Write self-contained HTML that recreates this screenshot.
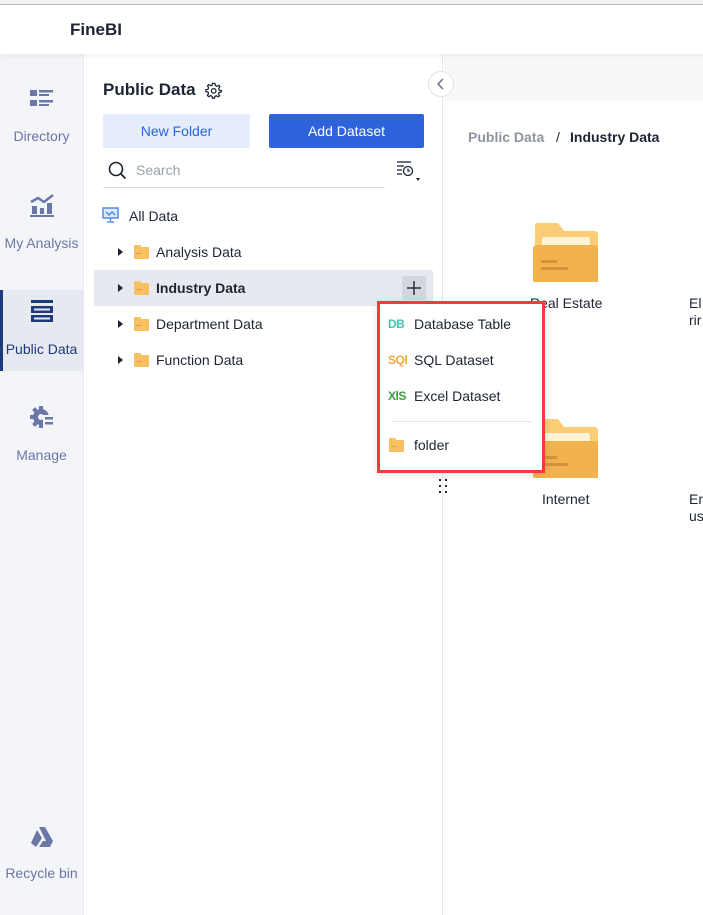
<!DOCTYPE html>
<html><head><meta charset="utf-8"><style>
*{margin:0;padding:0;box-sizing:border-box}
body{width:703px;height:915px;overflow:hidden;background:#fff;font-family:"Liberation Sans",sans-serif;position:relative;color:#1d2433}
.abs{position:absolute}
.topline{left:0;top:0;width:703px;height:5px;background:#f2f2f2;border-bottom:1px solid #bdbdbd}
.header{left:0;top:5px;width:703px;height:49px;background:#fff;box-shadow:0 2px 6px rgba(0,0,0,.06);z-index:2}
.side{left:0;top:54px;width:84px;height:861px;background:#f4f5f9;border-right:1px solid #e8e9ee}
.nav{position:absolute;left:0;width:83px;text-align:center;font-size:14px;color:#6b77a6}
.panel{left:84px;top:54px;width:359px;height:861px;background:#fff;border-right:1px solid #e6e7eb}
.band{left:444px;top:54px;width:259px;height:47px;background:#f7f8fa}
.tree{font-size:14px;color:#1d2433}
.folder{position:absolute;width:15px;height:12px;background:#f8c060;border-radius:1px}
.folder:before{content:"";position:absolute;left:0;top:-2px;width:7px;height:3px;background:#f8c060;border-radius:1px 1px 0 0}
.folder:after{content:"";position:absolute;left:2px;top:6px;width:6px;height:1px;background:#e0a040}
.tri{width:0;height:0;border-left:5px solid #1d2433;border-top:4px solid transparent;border-bottom:4px solid transparent}
.big{width:66px;height:60px}
</style></head><body>
<div class="abs topline"></div>
<div class="abs header"><div class="abs" style="left:70px;top:15px;font-size:17px;font-weight:bold;color:#1d2433">FineBI</div></div>
<div class="abs side">
  <div class="nav" style="top:34px">
    <svg width="24" height="22" viewBox="0 0 24 22" style="display:block;margin:0 auto"><rect x="0" y="2" width="7" height="6" fill="#6b77a6"/><rect x="9" y="2" width="14" height="2.5" fill="#6b77a6"/><rect x="9" y="6" width="10" height="2" fill="#6b77a6"/><rect x="0" y="12" width="7" height="6" fill="#6b77a6"/><rect x="9" y="12" width="14" height="2.5" fill="#6b77a6"/><rect x="9" y="16" width="10" height="2" fill="#6b77a6"/></svg>
    <div style="margin-top:18px">Directory</div></div>
  <div class="nav" style="top:140px">
    <svg width="26" height="24" viewBox="0 0 26 24" style="display:block;margin:0 auto"><path d="M2 8 L9 4 L15 8 L24 1" stroke="#6b77a6" stroke-width="2.5" fill="none"/><rect x="3" y="12" width="5" height="8" fill="#6b77a6"/><rect x="11" y="14" width="4" height="6" fill="#6b77a6"/><rect x="18" y="9" width="5" height="11" fill="#6b77a6"/><rect x="1" y="21" width="24" height="2" fill="#6b77a6"/></svg>
    <div style="margin-top:17px">My Analysis</div></div>
  <div style="position:absolute;left:0;top:236px;width:83px;height:81px;background:#e7e9f1;border-left:3px solid #1f3a7a"></div>
  <div class="nav" style="top:245px;color:#1f3a7a">
    <svg width="24" height="24" viewBox="0 0 24 24" style="display:block;margin:0 auto"><rect x="1" y="1" width="22" height="3" fill="#1f3a7a"/><rect x="1" y="7" width="22" height="7" fill="#1f3a7a"/><rect x="4" y="9.5" width="16" height="2" fill="#e7e9f1"/><rect x="1" y="16" width="22" height="7" fill="#1f3a7a"/><rect x="4" y="18.5" width="16" height="2" fill="#e7e9f1"/></svg>
    <div style="margin-top:18px">Public Data</div></div>
  <div class="nav" style="top:351px">
    <svg width="24" height="24" viewBox="0 0 24 24" style="display:block;margin:0 auto"><circle cx="11" cy="12" r="8" fill="#6b77a6"/><g fill="#6b77a6"><rect x="9" y="1" width="4" height="4"/><rect x="9" y="19" width="4" height="4"/><rect x="0" y="10" width="4" height="4"/><rect x="3" y="3" width="4" height="4" transform="rotate(45 5 5)"/><rect x="3" y="17" width="4" height="4" transform="rotate(45 5 19)"/></g><circle cx="11" cy="12" r="3" fill="#f4f5f9"/><rect x="13" y="10" width="10" height="12" fill="#f4f5f9"/><rect x="15" y="12" width="8" height="2.5" fill="#6b77a6"/><rect x="15" y="17" width="8" height="2.5" fill="#6b77a6"/></svg>
    <div style="margin-top:18px">Manage</div></div>
  <div class="nav" style="top:772px">
    <svg width="24" height="22" viewBox="0 0 24 22" style="display:block;margin:0 auto"><path d="M9 1 L15 1 L23 15 L19 21 Z M7 4 L12 12 L6 21 L1 17 Z M13 15 L23 15 L20 21 L9 21 Z" fill="#6b77a6"/></svg>
    <div style="margin-top:17px">Recycle bin</div></div>
</div>
<div class="abs panel">
  <div class="abs" style="left:19px;top:26px;font-size:17px;font-weight:bold">Public Data</div>
  <svg class="abs" style="left:121px;top:28px" width="17" height="17" viewBox="0 0 24 24"><path d="M12 2 L14 2 L14.6 4.8 L17 6 L19.6 4.6 L21 6.4 L19.4 9 L20 11.4 L23 12 L23 14 L20 14.6 L19 17 L20.6 19.4 L18.6 21 L16 19.4 L14 20.2 L13.4 23 L10.6 23 L10 20.2 L7.8 19.2 L5.2 20.8 L3.4 19 L5 16.4 L4.2 14.2 L1.2 13.6 L1.2 11 L4.2 10.4 L5 8 L3.6 5.4 L5.4 3.6 L8 5.2 L10.2 4.4 L10.6 2 Z" fill="none" stroke="#1d2433" stroke-width="1.8"/><circle cx="12.3" cy="12.5" r="3.2" fill="none" stroke="#1d2433" stroke-width="1.8"/></svg>
  <div class="abs" style="left:19px;top:60px;width:147px;height:34px;background:#e5edfc;border-radius:2px;color:#2d63d8;font-size:14px;text-align:center;line-height:34px">New Folder</div>
  <div class="abs" style="left:185px;top:60px;width:155px;height:34px;background:#2e63db;border-radius:2px;color:#fff;font-size:14px;text-align:center;line-height:34px">Add Dataset</div>
  <svg class="abs" style="left:24px;top:107px" width="19" height="19" viewBox="0 0 19 19"><circle cx="8" cy="8" r="6.5" fill="none" stroke="#1d2433" stroke-width="1.6"/><line x1="13" y1="13" x2="17.5" y2="17.5" stroke="#1d2433" stroke-width="1.8"/></svg>
  <div class="abs" style="left:52px;top:108px;font-size:14px;color:#9aa0ab">Search</div>
  <div class="abs" style="left:19px;top:133px;width:282px;height:1px;background:#dcdee3"></div>
  <svg class="abs" style="left:312px;top:106px" width="28" height="24" viewBox="0 0 28 24"><line x1="1" y1="2" x2="15" y2="2" stroke="#1d2433" stroke-width="1.3"/><line x1="1" y1="6" x2="8" y2="6" stroke="#1d2433" stroke-width="1.3"/><line x1="1" y1="10" x2="6" y2="10" stroke="#1d2433" stroke-width="1.3"/><line x1="1" y1="14" x2="6" y2="14" stroke="#1d2433" stroke-width="1.3"/><circle cx="12" cy="11" r="4.5" fill="none" stroke="#1d2433" stroke-width="1.3"/><path d="M12 8.5 V11 H14" stroke="#1d2433" stroke-width="1.2" fill="none"/><path d="M20 18 L24 18 L22 21 Z" fill="#1d2433"/></svg>
  <svg class="abs" style="left:18px;top:153px" width="17" height="16" viewBox="0 0 17 16"><rect x="1" y="1" width="15" height="10" fill="#dbe7fb" stroke="#4a86e8" stroke-width="1.4"/><path d="M4 5 L7 8 L10 5 L13 8" stroke="#4a86e8" stroke-width="1.4" fill="none"/><line x1="8.5" y1="11" x2="8.5" y2="14" stroke="#4a86e8" stroke-width="1.4"/><line x1="5" y1="15" x2="12" y2="15" stroke="#4a86e8" stroke-width="1.4"/></svg>
  <div class="abs tree" style="left:45px;top:154px">All Data</div>
  <div class="abs tri" style="left:34px;top:194px"></div><div class="folder" style="left:50px;top:193px"></div><div class="abs tree" style="left:72px;top:190px">Analysis Data</div>
  <div class="abs" style="left:10px;top:216px;width:339px;height:36px;background:#e7e9f0;border-radius:2px"></div>
  <div class="abs tri" style="left:34px;top:230px"></div><div class="folder" style="left:50px;top:229px"></div><div class="abs tree" style="left:72px;top:226px;font-weight:bold">Industry Data</div>
  <div class="abs" style="left:318px;top:222px;width:24px;height:24px;background:#d3d7e0;border-radius:2px"></div>
  <svg class="abs" style="left:323px;top:227px" width="14" height="14"><line x1="7" y1="0" x2="7" y2="14" stroke="#1d2433" stroke-width="1.4"/><line x1="0" y1="7" x2="14" y2="7" stroke="#1d2433" stroke-width="1.4"/></svg>
  <div class="abs tri" style="left:34px;top:266px"></div><div class="folder" style="left:50px;top:265px"></div><div class="abs tree" style="left:72px;top:262px">Department Data</div>
  <div class="abs tri" style="left:34px;top:302px"></div><div class="folder" style="left:50px;top:301px"></div><div class="abs tree" style="left:72px;top:298px">Function Data</div>
</div>
<div class="abs band"></div>
<div class="abs" style="left:428px;top:71px;width:26px;height:26px;border-radius:50%;background:#fff;border:1px solid #e3e5ea;z-index:3"><svg width="24" height="24" style="position:absolute;left:0;top:0"><path d="M14 7 L9 12 L14 17" stroke="#5a6070" stroke-width="1.3" fill="none"/></svg></div>
<div class="abs" style="left:468px;top:129px;font-size:14px;font-weight:bold;color:#8e949f">Public Data</div>
<div class="abs" style="left:556px;top:129px;font-size:14px;color:#1d2433">/</div>
<div class="abs" style="left:570px;top:129px;font-size:14px;font-weight:bold;color:#1d2433">Industry Data</div>
<svg class="abs big" style="left:532px;top:222px" viewBox="0 0 66 60"><path d="M3 4 Q3 1 6 1 L26 1 L32 9 L62 9 Q66 9 66 13 L66 60 L3 60 Z" fill="#fbcd76"/><rect x="10" y="15" width="48" height="14" rx="2" fill="#fff3d6"/><rect x="1" y="23" width="66" height="38" rx="3" fill="#f2b24e"/><rect x="9" y="38" width="16" height="3" fill="#d6923a"/><rect x="9" y="45" width="27" height="3" fill="#d6923a"/></svg>
<svg class="abs big" style="left:532px;top:418px" viewBox="0 0 66 60"><path d="M3 4 Q3 1 6 1 L26 1 L32 9 L62 9 Q66 9 66 13 L66 60 L3 60 Z" fill="#fbcd76"/><rect x="10" y="15" width="48" height="14" rx="2" fill="#fff3d6"/><rect x="1" y="23" width="66" height="38" rx="3" fill="#f2b24e"/><rect x="9" y="38" width="16" height="3" fill="#d6923a"/><rect x="9" y="45" width="27" height="3" fill="#d6923a"/></svg>
<div class="abs" style="left:530px;top:295px;font-size:14px">Real Estate</div>
<div class="abs" style="left:542px;top:491px;font-size:14px">Internet</div>
<div class="abs" style="left:689px;top:295px;font-size:14px;line-height:17px">El<br>rir</div>
<div class="abs" style="left:689px;top:491px;font-size:14px;line-height:17px">Er<br>us</div>
<div class="abs" style="left:437px;top:478px;width:14px;height:16px">
<svg width="14" height="16"><g fill="#1d2433"><rect x="2" y="1" width="2" height="2"/><rect x="8" y="1" width="2" height="2"/><rect x="2" y="7" width="2" height="2"/><rect x="8" y="7" width="2" height="2"/><rect x="2" y="13" width="2" height="2"/><rect x="8" y="13" width="2" height="2"/></g></svg></div>
<div class="abs" style="left:377px;top:301px;width:168px;height:172px;background:#fff;border:3px solid #f43a3a;box-shadow:0 2px 8px rgba(0,0,0,.1);z-index:4">
  <div class="abs" style="left:8px;top:13px;font-size:12px;font-weight:bold;color:#4bbfae;letter-spacing:-0.5px">DB</div>
  <div class="abs" style="left:34px;top:12px;font-size:14px">Database Table</div>
  <div class="abs" style="left:8px;top:49px;font-size:12px;font-weight:bold;color:#f2a93b;letter-spacing:-0.5px">SQl</div>
  <div class="abs" style="left:34px;top:48px;font-size:14px">SQL Dataset</div>
  <div class="abs" style="left:8px;top:85px;font-size:12px;font-weight:bold;color:#3f9e3f;letter-spacing:-0.5px">XlS</div>
  <div class="abs" style="left:34px;top:84px;font-size:14px">Excel Dataset</div>
  <div class="abs" style="left:12px;top:117px;width:140px;height:1px;background:#e3e5ea"></div>
  <div class="folder" style="left:9px;top:136px"></div>
  <div class="abs" style="left:34px;top:133px;font-size:14px">folder</div>
</div>
</body></html>
